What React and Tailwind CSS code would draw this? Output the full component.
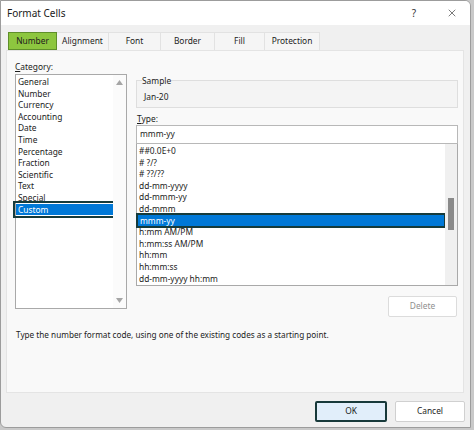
import { X } from 'lucide-react'

const categories = [
  'General', 'Number', 'Currency', 'Accounting', 'Date', 'Time', 'Percentage',
  'Fraction', 'Scientific', 'Text', 'Special', 'Custom',
]

const types = [
  '##0.0E+0', '# ?/?', '# ??/??', 'dd-mm-yyyy', 'dd-mmm-yy', 'dd-mmm', 'mmm-yy',
  'h:mm AM/PM', 'h:mm:ss AM/PM', 'hh:mm', 'hh:mm:ss', 'dd-mm-yyyy hh:mm',
]

const tabs = [
  { label: 'Number', w: 'w-[49px]' },
  { label: 'Alignment', w: 'w-[52px]' },
  { label: 'Font', w: 'w-[52px]' },
  { label: 'Border', w: 'w-[54px]' },
  { label: 'Fill', w: 'w-[50px]' },
  { label: 'Protection', w: 'w-[55px]' },
]

function Arrow({ up }) {
  return (
    <svg width="7" height="5" viewBox="0 0 7 5">
      <path d={up ? 'M0 5 L3.5 0 L7 5 Z' : 'M0 0 L3.5 5 L7 0 Z'} fill="#a6a6a6" />
    </svg>
  )
}

export default function App() {
  return (
    <div className="w-[474px] h-[430px] bg-[#c9c9c9] text-[8.4px] text-[#1c1c1c]" style={{ fontFamily: '"Segoe UI", "Noto Sans", sans-serif' }}>
      <div className="w-[471px] h-[428px] bg-[#f0f0f0] border border-[#9c9c9c] rounded-tr-[6px] rounded-bl-[6px] overflow-hidden flex flex-col">
        {/* title bar */}
        <div className="h-[24px] bg-white flex items-center pl-[6px] shrink-0">
          <span className="text-[10px] text-[#1a1a1a]">Format Cells</span>
          <div className="ml-auto w-[40px] flex justify-center text-[10px] text-[#333]">?</div>
          <div className="w-[36px] flex justify-center shrink-0">
            <X size={12} strokeWidth={1.2} color="#222" />
          </div>
        </div>

        {/* tabs */}
        <div className="flex pl-[7px] pt-[7px] h-[25px] shrink-0">
          {tabs.map((t, i) => (
            <div
              key={t.label}
              className={`${t.w} h-[18px] flex items-center justify-center ${
                i === 0
                  ? 'bg-[#8dc63f] border border-[#5f8f2a]'
                  : 'bg-[#f5f5f5] border-r border-t border-[#e2e2e2]'
              }`}
            >
              {t.label}
            </div>
          ))}
        </div>

        {/* panel */}
        <div className="ml-[5px] w-[458px] h-[343px] bg-[#f9f9f9] border border-[#e4e4e4] flex flex-col shrink-0">
          <div className="flex pl-[8px] pt-[9px]">
            {/* category column */}
            <div className="w-[112px] flex flex-col">
              <div className="h-[14px] leading-[14px]">
                <span className="underline">C</span>ategory:
              </div>
              <div className="h-[235px] border border-[#a9a9a9] bg-white flex">
                <div className="flex-1 pt-[1px]">
                  {categories.map(c => (
                    <div
                      key={c}
                      className={`h-[11.6px] leading-[11.6px] pl-[2px] ${
                        c === 'Custom'
                          ? 'bg-[#0078d7] text-white w-[97px] outline-2 outline-offset-[1px] outline-[#163b3b]'
                          : ''
                      }`}
                    >
                      {c}
                    </div>
                  ))}
                </div>
                <div className="w-[13px] bg-[#fbfbfb] flex flex-col items-center justify-between py-[5px]">
                  <Arrow up />
                  <Arrow />
                </div>
              </div>
            </div>

            {/* right column */}
            <div className="ml-[9px] w-[322px] flex flex-col">
              <fieldset className="mt-[16px] h-[32px] border border-[#dedede] bg-[#f4f4f4] pl-[5px]">
                <legend className="px-0 leading-[9px] ml-0">Sample</legend>
                <div className="pt-[6px] pl-[2px]">Jan-20</div>
              </fieldset>
              <div className="mt-[4px] h-[13px] leading-[13px] pl-[1px]">
                <span className="underline">T</span>ype:
              </div>
              <div className="h-[19px] bg-white border border-[#b8b8b8] flex items-center pl-[3px]">mmm-yy</div>
              <div className="h-[142px] bg-white border border-[#a9a9a9] border-t-0 flex">
                <div className="flex-1 pt-[1px]">
                  {types.map(t => (
                    <div
                      key={t}
                      className={`h-[11.6px] leading-[11.6px] pl-[2px] ${
                        t === 'mmm-yy'
                          ? 'bg-[#0078d7] text-white mx-[1px] outline-2 outline-offset-0 outline-[#163b3b]'
                          : ''
                      }`}
                    >
                      {t}
                    </div>
                  ))}
                </div>
                <div className="w-[12px] bg-[#f0f0f0] flex justify-center">
                  <div className="w-[6px] h-[32px] mt-[54px] bg-[#8a8a8a]" />
                </div>
              </div>
              <div className="self-end mr-[1px] mt-[10px] w-[69px] h-[21px] bg-white border border-[#dcdcdc] rounded-[2px] flex items-center justify-center text-[#8f8f8f]">
                Delete
              </div>
            </div>
          </div>
          <div className="pl-[9px] mt-[12px] text-[8.2px]">
            Type the number format code, using one of the existing codes as a starting point.
          </div>
        </div>

        {/* footer */}
        <div className="flex justify-end pt-[8px] pr-[5px] gap-[8px]">
          <div className="w-[72px] h-[21px] bg-[#e1eefa] border-2 border-[#17393a] rounded-[2px] flex items-center justify-center">
            OK
          </div>
          <div className="w-[70px] h-[21px] bg-white border border-[#d0d0d0] rounded-[2px] flex items-center justify-center">
            Cancel
          </div>
        </div>
      </div>
    </div>
  )
}
